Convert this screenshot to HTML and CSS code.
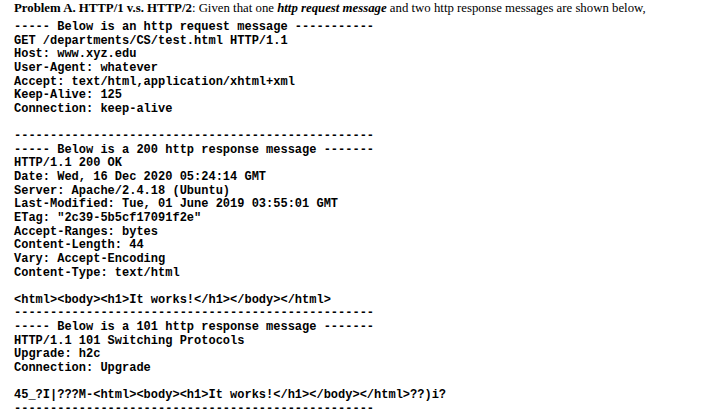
FILE: index.html
```html
<!DOCTYPE html>
<html>
<head>
<meta charset="utf-8">
<link rel="stylesheet" href="styles.css">
</head>
<body>
<div class="page">
<p class="title"><b>Problem A. HTTP/1 v.s. HTTP/2</b>: Given that one <b><i>http request message</i></b> and two http response messages are shown below,</p>
<pre class="code">----- Below is an http request message -----------
GET /departments/CS/test.html HTTP/1.1
Host: www.xyz.edu
User-Agent: whatever
Accept: text/html,application/xhtml+xml
Keep-Alive: 125
Connection: keep-alive

--------------------------------------------------
----- Below is a 200 http response message -------
HTTP/1.1 200 OK
Date: Wed, 16 Dec 2020 05:24:14 GMT
Server: Apache/2.4.18 (Ubuntu)
Last-Modified: Tue, 01 June 2019 03:55:01 GMT
ETag: "2c39-5b5cf17091f2e"
Accept-Ranges: bytes
Content-Length: 44
Vary: Accept-Encoding
Content-Type: text/html

&lt;html&gt;&lt;body&gt;&lt;h1&gt;It works!&lt;/h1&gt;&lt;/body&gt;&lt;/html&gt;
--------------------------------------------------
----- Below is a 101 http response message -------
HTTP/1.1 101 Switching Protocols
Upgrade: h2c
Connection: Upgrade

45_?I|???M-&lt;html&gt;&lt;body&gt;&lt;h1&gt;It works!&lt;/h1&gt;&lt;/body&gt;&lt;/html&gt;??)i?
--------------------------------------------------</pre>
</div>
</body>
</html>
```
FILE: styles.css
```css
html, body {
  margin: 0;
  padding: 0;
  background: #ffffff;
}
.page {
  padding: 2px 0 0 14px;
  color: #000;
}
.title {
  margin: 0;
  font-family: "Liberation Serif", serif;
  font-size: 12.8px;
  line-height: 13px;
  white-space: nowrap;
}
.code {
  margin: 6px 0 0 0;
  font-family: "Liberation Mono", monospace;
  font-weight: bold;
  font-size: 12px;
  line-height: 13.64px;
}
```
